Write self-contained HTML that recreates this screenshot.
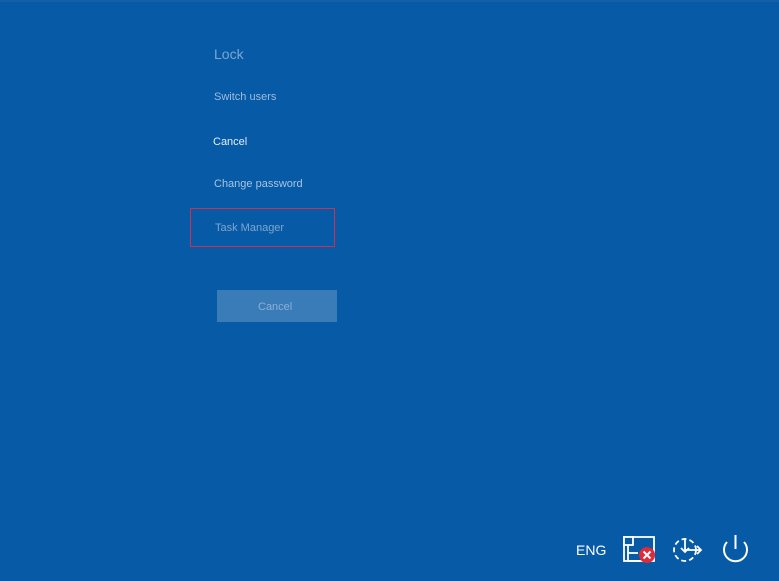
<!DOCTYPE html>
<html><head><style>
html,body{margin:0;padding:0}
body{width:779px;height:581px;background:#075aa5;position:relative;overflow:hidden;font-family:"Liberation Sans",Arial,sans-serif}
.t{position:absolute;color:#8fb3d6;white-space:nowrap}
</style></head><body>
<div style="position:absolute;left:0;top:0;width:779px;height:2px;background:#1260a8"></div>
<div class="t" style="left:214px;top:46px;font-size:14px;color:#7ea6cf">Lock</div>
<div class="t" style="left:214px;top:91px;font-size:11px;color:#9cbcdd">Switch users</div>
<div class="t" style="left:213px;top:136px;font-size:11px;color:#e6eef8">Cancel</div>
<div class="t" style="left:214px;top:178px;font-size:11px;color:#a8c4e2">Change password</div>
<div style="position:absolute;left:190px;top:208px;width:143px;height:37px;border:1.5px solid #d0304a"></div>
<div class="t" style="left:215px;top:222px;font-size:11px;color:#7fa6cf">Task Manager</div>
<div style="position:absolute;left:217px;top:290px;width:120px;height:32px;background:#3a7cb8"></div>
<div class="t" style="left:258px;top:301px;font-size:11px;color:#8cb0d4">Cancel</div>
<div class="t" style="left:576px;top:542px;font-size:14px;color:#fff">ENG</div>
<svg width="779" height="581" style="position:absolute;left:0;top:0" fill="none" stroke="#fff" stroke-width="1.8">
<rect x="624" y="537" width="30" height="24"/>
<rect x="624" y="537" width="9" height="8" fill="#075aa5"/>
<line x1="628" y1="545" x2="628" y2="561"/>
<line x1="628" y1="553" x2="638" y2="553"/>
<line x1="628" y1="561" x2="640" y2="561"/>
<circle cx="647" cy="555" r="8" fill="#e02a3a" stroke="none"/>
<path d="M643.5 551.5l7 7M650.5 551.5l-7 7" stroke-width="2"/>
<circle cx="685" cy="550" r="11" stroke-dasharray="5 3"/>
<path d="M685 538v14M681 548l4 4 4-4M686 550h15M697 546l4 4-4 4"/>
<path d="M727 542a11.5 11.5 0 1 0 17 0M735.5 535v14" stroke-width="2"/>
</svg>
</body></html>
